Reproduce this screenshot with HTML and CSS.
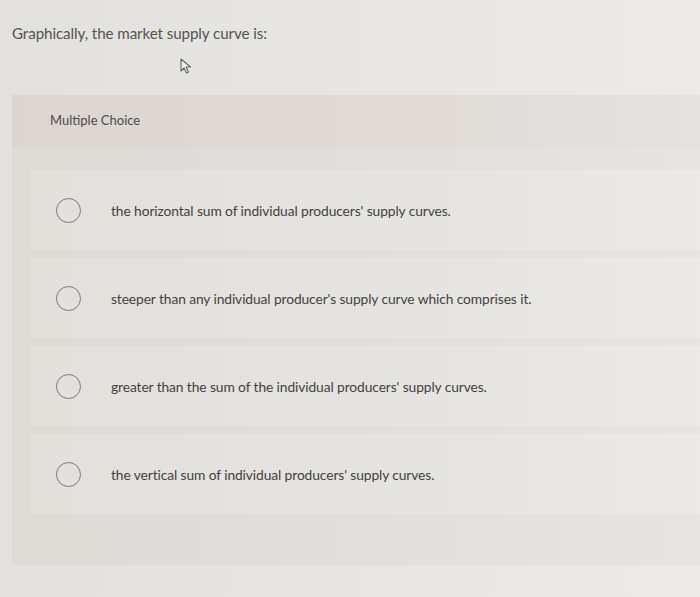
FILE: index.html
```html
<!DOCTYPE html>
<html>
<head>
<meta charset="utf-8">
<link rel="stylesheet" href="styles.css">
</head>
<body>
<div class="page">
  <h1 class="question">Graphically, the market supply curve is:</h1>
  <div class="cursor-row">
    <svg class="cursor" width="14" height="16" viewBox="0 0 14 16"><path d="M2 1 L2 13 L5 10 L7.5 15 L9.5 14 L7 9 L11.5 9 Z" fill="#f0eeeb" stroke="#666" stroke-width="1.1" stroke-linejoin="round"/></svg>
  </div>
  <div class="panel">
    <div class="panel-head">Multiple Choice</div>
    <div class="options">
      <div class="option"><span class="radio"></span><span class="label">the horizontal sum of individual producers' supply curves.</span></div>
      <div class="option"><span class="radio"></span><span class="label">steeper than any individual producer's supply curve which comprises it.</span></div>
      <div class="option"><span class="radio"></span><span class="label">greater than the sum of the individual producers' supply curves.</span></div>
      <div class="option"><span class="radio"></span><span class="label">the vertical sum of individual producers' supply curves.</span></div>
    </div>
  </div>
</div>
</body>
</html>
```

FILE: styles.css
```css
html, body {
  margin: 0;
  padding: 0;
}
body {
  background: linear-gradient(90deg, #e3e1de 0%, #e8e7e5 60%, #ecebea 100%);
  font-family: Lato, "Open Sans", "Liberation Sans", sans-serif;
  color: #4a4a4a;
  width: 700px;
  height: 597px;
  overflow: hidden;
}
.page {
  padding: 22px 0 0 12px;
}
.question {
  margin: 0;
  font-size: 15.2px;
  font-weight: 400;
  color: #555350;
  line-height: 22px;
  letter-spacing: -0.1px;
}
.cursor-row {
  height: 51px;
  padding-left: 167px;
  padding-top: 14px;
  box-sizing: border-box;
}
.cursor {
  display: block;
}
.panel {
  background: linear-gradient(90deg, #dedad6 0%, #e2dfdc 60%, #e7e5e3 100%);
  height: 470px;
}
.panel-head {
  height: 53px;
  padding: 17px 0 0 38px;
  box-sizing: border-box;
  font-size: 13px;
  color: #4d4a48;
  background: linear-gradient(90deg, #dcd6d1 0%, #e0dbd7 60%, #e5e2df 100%);
}
.options {
  display: flex;
  flex-direction: column;
  gap: 8px;
  padding: 22px 0 0 18px;
}
.option {
  height: 80px;
  display: flex;
  align-items: center;
  background: linear-gradient(90deg, #e3e0dc 0%, #e6e4e1 60%, #ebeae8 100%);
  padding-left: 26px;
}
.radio {
  width: 23px;
  height: 23px;
  border: 1.5px solid #7a7876;
  border-radius: 50%;
  flex: none;
}
.label {
  margin-left: 30px;
  font-size: 13.8px;
  color: #434140;
  letter-spacing: -0.1px;
}
```
